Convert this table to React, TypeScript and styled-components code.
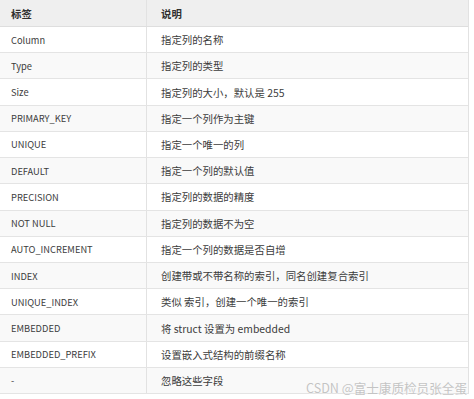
import React from "react";
import styled, { createGlobalStyle } from "styled-components";

const rows: [string, string][] = [
  ["Column", "指定列的名称"],
  ["Type", "指定列的类型"],
  ["Size", "指定列的大小，默认是 255"],
  ["PRIMARY_KEY", "指定一个列作为主键"],
  ["UNIQUE", "指定一个唯一的列"],
  ["DEFAULT", "指定一个列的默认值"],
  ["PRECISION", "指定列的数据的精度"],
  ["NOT NULL", "指定列的数据不为空"],
  ["AUTO_INCREMENT", "指定一个列的数据是否自增"],
  ["INDEX", "创建带或不带名称的索引，同名创建复合索引"],
  ["UNIQUE_INDEX", "类似 索引，创建一个唯一的索引"],
  ["EMBEDDED", "将 struct 设置为 embedded"],
  ["EMBEDDED_PREFIX", "设置嵌入式结构的前缀名称"],
  ["-", "忽略这些字段"],
];

const App: React.FC = () => {
  return (
    <Page>
      <GlobalStyle />
      <Table>
        <HeaderRow>
          <Cell $bold>标签</Cell>
          <Cell $bold $right>
            说明
          </Cell>
        </HeaderRow>
        {rows.map(([tag, desc], i) => (
          <Row key={tag} $striped={i % 2 === 1}>
            <Cell $size={9.3}>{tag}</Cell>
            <Cell $right>{desc}</Cell>
          </Row>
        ))}
      </Table>
      <Watermark>CSDN @富士康质检员张全蛋</Watermark>
    </Page>
  );
};

export default App;

const GlobalStyle = createGlobalStyle`
  html, body {
    margin: 0;
    padding: 0;
    background: #ffffff;
  }
  body {
    font-family: "Noto Sans CJK SC", "Noto Sans", sans-serif;
  }
`;

const Page = styled.div`
  position: relative;
  width: 474px;
  height: 399px;
  overflow: hidden;
  background: #ffffff;
`;

const Table = styled.div`
  width: 469px;
  border-right: 1px solid #e2e2e2;
  box-sizing: border-box;
`;

const HeaderRow = styled.div`
  display: grid;
  grid-template-columns: 146px 1fr;
  height: 27px;
  background: #efefef;
  border-bottom: 1px solid #dedede;
  box-sizing: border-box;
`;

const Row = styled.div<{ $striped?: boolean }>`
  display: grid;
  grid-template-columns: 146px 1fr;
  height: 26.23px;
  background: ${(p) => (p.$striped ? "#f9f9f9" : "#ffffff")};
  border-bottom: 1px solid #e4e4e4;
  box-sizing: border-box;
`;

const Cell = styled.div<{ $bold?: boolean; $right?: boolean; $size?: number }>`
  display: flex;
  align-items: center;
  padding-left: ${(p) => (p.$right ? "14px" : "11px")};
  border-left: ${(p) => (p.$right ? "1px solid #e2e2e2" : "none")};
  font-size: ${(p) => p.$size ?? 10.4}px;
  font-weight: ${(p) => (p.$bold ? 700 : 400)};
  color: ${(p) => (p.$bold ? "#303030" : "#3c3c3c")};
  white-space: nowrap;
`;

const Watermark = styled.div`
  position: absolute;
  right: 7px;
  top: 378px;
  font-family: "Noto Sans CJK SC", "Liberation Sans", sans-serif;
  font-size: 12.6px;
  color: #c4c4c4;
  text-shadow: 0 0 1px #ffffff, 0 0 1px #ffffff;
  white-space: nowrap;
`;
